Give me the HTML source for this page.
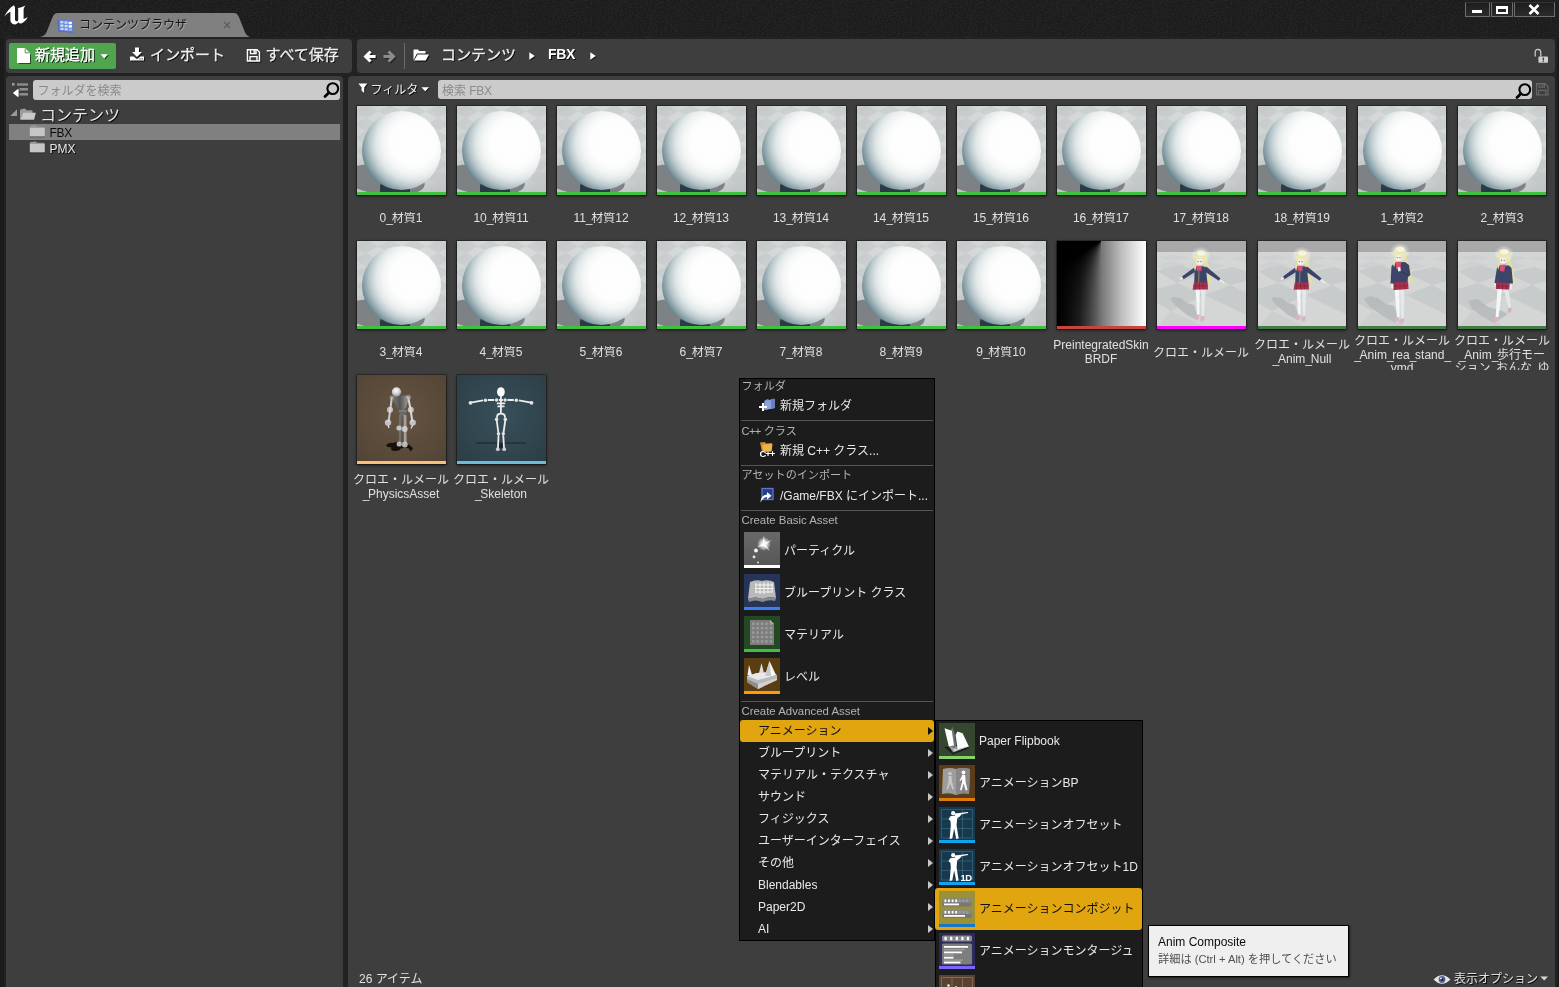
<!DOCTYPE html><html lang="ja"><head><meta charset="utf-8"><title>コンテンツブラウザ</title><style>
*{box-sizing:border-box;margin:0;padding:0}
html,body{width:1559px;height:987px;overflow:hidden;background:#1b1b1b}
body{position:relative;font-family:"Liberation Sans","Noto Sans CJK JP",sans-serif;font-size:12px;color:#e6e6e6;line-height:1}
.a{position:absolute}
.t{position:absolute;white-space:nowrap}
.sh{text-shadow:1px 1px 0 rgba(0,0,0,.85)}
.b{-webkit-text-stroke:.3px currentColor}
.panel{position:absolute;background:#3e3e3e;border-radius:4px}
.inp{position:absolute;background:#cbcbcb;border-radius:3px}
.th{position:absolute;width:89px;height:89px;overflow:hidden;box-shadow:0 1px 3px rgba(0,0,0,.7),0 0 0 1px rgba(0,0,0,.25)}
.th .bar{position:absolute;left:0;right:0;bottom:0;height:3px}
.lb{position:absolute;width:106px;margin-left:-1px;text-align:center;font-size:12px;line-height:13.5px;color:#e0e0e0;overflow:hidden}
.menu{position:absolute;background:#1c1c1c;border:1px solid #000}
.mh{position:absolute;left:1.5px;font-size:11.5px;color:#b4b4b4;white-space:nowrap}
.mi{position:absolute;font-size:12px;color:#e8e8e8;white-space:nowrap}
.sep{position:absolute;left:1px;right:1px;height:1px;background:#555}
.tile{position:absolute;width:36px;height:36px;overflow:hidden}
.tile .bar{position:absolute;left:0;right:0;bottom:0;height:3px}
.arr{position:absolute;width:0;height:0;border-left:5px solid #c8c8c8;border-top:4px solid transparent;border-bottom:4px solid transparent}

.u{margin-right:-1.3px}
.sph{background:radial-gradient(ellipse 70px 60px at 55% 35%,#e4e6e6 0,#d4d7d7 60%,#c2c5c5 100%)}
.floor{position:absolute;left:-40px;top:-40px;width:170px;height:170px;opacity:.45;background:repeating-conic-gradient(#bfc3c3 0 25%,rgba(255,255,255,0) 0 50%) 0 0/34px 34px;transform:scaleY(.55) rotate(45deg)}
.sd{position:absolute;left:-14px;top:59px;width:82px;height:30px;border-radius:50%;background:#757a7d;opacity:.9;transform:rotate(7deg)}
.sc{position:absolute;left:23px;top:74px;width:30px;height:16px;border-radius:40% 40% 0 0;background:#2b3b46}
.ball{position:absolute;left:5px;top:4.5px;width:79px;height:79px;border-radius:50%;background:radial-gradient(circle 55px at 65% 40%,#fff 0,#fdfdfd 42%,#f3f5f5 56%,#e0e6e7 68%,#b9c7cb 80%,#869ea6 91%,#587782 100%)}
</style></head><body><div id="root" style="position:absolute;left:0;top:0;width:1559px;height:987px;will-change:transform">
<svg class="a" style="left:0;top:0" width="1559" height="987"><filter id="nz" x="0" y="0" width="100%" height="100%"><feTurbulence type="fractalNoise" baseFrequency=".8" numOctaves="2" seed="3"/><feColorMatrix values="0 0 0 0 1  0 0 0 0 1  0 0 0 0 1  .5 .5 .5 0 -.62"/></filter><rect width="1559" height="38" filter="url(#nz)" opacity=".16"/></svg>
<div class="a" style="left:4px;top:37px;width:1553px;height:950px;background:#222"></div>
<svg class="a" style="left:38px;top:12px" width="214" height="26" viewBox="0 0 214 26"><path d="M0 25 C4.5 25 7 23.5 8.8 19.5 L14.2 6 C15.5 2.5 16.8 1 20 1 L195.5 1 C198.7 1 200 2.5 201.3 6 L206.7 19.5 C208.5 23.5 210.5 25 213.5 25 Z" fill="#808080"/></svg>
<div class="t" style="left:79px;top:18.5px;font-size:12px;color:#141414;text-shadow:1px 1px 0 rgba(255,255,255,.28)">コンテンツブラウザ</div>
<div class="panel" style="left:6px;top:39px;width:346px;height:34px"></div>
<div class="panel" style="left:357px;top:39px;width:1198px;height:34px"></div>
<div class="a" style="left:9px;top:43px;width:107px;height:26px;background:#50a650;border-radius:2px"></div>
<div class="t sh b" style="left:35px;top:47px;font-size:15px;color:#fff">新規追加</div>
<div class="t sh b" style="left:150px;top:47px;font-size:15px;color:#eee">インポート</div>
<div class="t sh b" style="left:265.5px;top:47px;font-size:15px;color:#eee">すべて保存</div>
<div class="t sh b" style="left:441px;top:47px;font-size:15px;color:#eee">コンテンツ</div>
<div class="t sh" style="left:548px;top:47px;font-size:14px;letter-spacing:-.3px;color:#fff;font-weight:bold">FBX</div>
<div class="panel" style="left:6px;top:76px;width:337px;height:915px"></div>
<div class="panel" style="left:348px;top:76px;width:1207px;height:915px"></div>
<div class="inp" style="left:33px;top:80px;width:307px;height:20px"></div>
<div class="t" style="left:37.5px;top:84.7px;font-size:12px;color:#8a8a8a">フォルダを検索</div>
<div class="inp" style="left:438px;top:80px;width:1094px;height:19px"></div>
<div class="t" style="left:442px;top:84.7px;font-size:12px;color:#8a8a8a">検索 <span style="letter-spacing:-.3px">FBX</span></div>
<div class="t sh" style="left:370.5px;top:84px;font-size:12px;color:#eee">フィルタ</div>
<div class="t sh" style="left:40px;top:108px;font-size:16px;color:#e8e8e8">コンテンツ</div>
<div class="a" style="left:9px;top:124px;width:331px;height:16px;background:#808080"></div>
<div class="t" style="left:49.5px;top:127px;font-size:12px;letter-spacing:-.3px;color:#0c0c0c">FBX</div>
<div class="t sh" style="left:49.5px;top:143px;font-size:12px;color:#e6e6e6">PMX</div>
<svg class="a" style="left:0px;top:0px;" width="32" height="28" viewBox="0 0 32 28"><path d="M4.2 16.8 C6.5 12 10 7.5 13.9 5.2 C14.6 6.2 15 7 15 8.2 L15 19 C15 20.6 15.8 21.3 16.7 21.3 C17.6 21.3 18.2 20.6 18.2 19.4 L18.2 9.2 C18.2 8.5 18 8.3 17.6 8 C20.5 7.8 23.5 6.5 25.7 5.2 C24.2 7 23.6 8.2 23.6 9.8 L23.6 18.9 C25 18.5 26.3 17.9 27.7 17 C26.4 20 23.8 22.6 21.2 23.4 C20 23.6 19 23.2 18.3 22.2 C17.3 23.6 16.2 24.4 14.8 24.4 C12 24.4 10.4 22.6 10.4 19.8 L10.4 11.8 C8 12.8 6 14.6 4.2 16.8 Z" fill="#fff"/></svg>
<svg class="a" style="left:56px;top:17.5px;" width="18" height="16" viewBox="0 0 18 16"><path d="M1.5 2.2 L3 1 L16.5 2.5 L17.2 15 L2.2 13.6Z" fill="#4f6fc0"/><path d="M3 1 L16.5 2.5 L17 14 L3.2 12.4Z" fill="#6484d6"/><g fill="#c9d6f6"><rect x="4.2" y="3" width="3.2" height="2.4"/><rect x="8.4" y="3.4" width="3.2" height="2.4"/><rect x="12.6" y="3.8" width="3.2" height="2.4" fill="#fff"/><rect x="4.3" y="6.4" width="3.2" height="2.4"/><rect x="8.5" y="6.8" width="3.2" height="2.4"/><rect x="12.7" y="7.2" width="3.2" height="2.4" fill="#fff"/><rect x="4.4" y="9.8" width="3.2" height="2.2"/><rect x="8.6" y="10.2" width="3.2" height="2.2"/><rect x="12.8" y="10.6" width="3.2" height="2.2" fill="#9db3ea"/></g></svg>
<svg class="a" style="left:223px;top:21px;" width="8" height="8" viewBox="0 0 8 8"><path d="M1 1 L7 7 M7 1 L1 7" stroke="#5c5c5c" stroke-width="1.2"/></svg>
<div class="a" style="left:1465px;top:2px;width:25px;height:15px;border:1px solid #6e6e6e;border-top-color:#333;background:linear-gradient(#1e1e1e,#2b2b2b)"></div>
<div class="a" style="left:1491px;top:2px;width:22px;height:15px;border:1px solid #6e6e6e;border-top-color:#333;background:linear-gradient(#1e1e1e,#2b2b2b)"></div>
<div class="a" style="left:1514px;top:2px;width:41px;height:15px;border:1px solid #6e6e6e;border-top-color:#333;background:linear-gradient(#1e1e1e,#2b2b2b)"></div>
<div class="a" style="left:1472px;top:10px;width:10px;height:3px;background:#fff"></div>
<div class="a" style="left:1496px;top:6px;width:12px;height:8px;border:2px solid #fff;border-top-width:3px"></div>
<svg class="a" style="left:1528px;top:4px;" width="12" height="11" viewBox="0 0 12 11"><path d="M1.5 1 L10.5 10 M10.5 1 L1.5 10" stroke="#fff" stroke-width="2.6"/></svg>
<svg class="a" style="left:17px;top:48px;" width="14" height="16" viewBox="0 0 14 16"><path d="M1 1 L8 1 L13 6 L13 15.5 L1 15.5Z" fill="#000" opacity=".55" transform="translate(1,1)"/><path d="M0 0 L8 0 L13 5 L13 15 L0 15Z" fill="#fff"/><path d="M8 0 L8 5 L13 5" fill="#50a650" opacity=".0"/><path d="M8.2 0.4 L8.2 4.8 L12.6 4.8" fill="none" stroke="#4a9a4a" stroke-width="1"/></svg>
<svg class="a" style="left:100px;top:54px;" width="10" height="6" viewBox="0 0 10 6"><path d="M1.5 1.2 L9 1.2 L5.25 5.5Z" fill="#000" opacity=".6"/><path d="M.5 .2 L8 .2 L4.25 4.5Z" fill="#fff"/></svg>
<svg class="a" style="left:130px;top:47px;" width="16" height="16" viewBox="0 0 16 16"><g transform="translate(1,1)" opacity=".7"><path d="M5 .5 H9 V5 H12 L7 10 L2 5 H5Z M0 9.5 H14 V13.5 H0Z" fill="#000"/></g><path d="M5 .5 H9 V5 H12 L7 10 L2 5 H5Z" fill="#fff"/><path d="M0 9.5 H3.5 L7 12 L10.5 9.5 H14 V13.5 H0Z" fill="#fff"/><rect x="9.5" y="11.3" width="1.2" height="1.2" fill="#444"/><rect x="11.6" y="11.3" width="1.2" height="1.2" fill="#444"/></svg>
<svg class="a" style="left:246px;top:49px;" width="16" height="14" viewBox="0 0 16 14"><g transform="translate(1,1)" opacity=".7"><path d="M1.5 .8 H11 L13.5 3.2 V12 H1.5Z" fill="none" stroke="#000" stroke-width="1.5"/></g><path d="M1.5 .8 H11 L13.5 3.2 V12 H1.5Z" fill="none" stroke="#fff" stroke-width="1.5"/><path d="M4.5 .8 V4.6 H10 V.8 M4 12 V7.6 H11 V12" fill="none" stroke="#fff" stroke-width="1.4"/><rect x="7.4" y="1.2" width="1.8" height="2.6" fill="#fff"/></svg>
<svg class="a" style="left:363px;top:50px;" width="15" height="15" viewBox="0 0 15 15"><path d="M6.5 .5 L8.6 2.6 L6.2 5 L12.6 5 L12.6 8 L6.2 8 L8.6 10.4 L6.5 12.5 L.5 6.5Z" fill="#000" opacity=".6" transform="translate(1.2,1.2)"/><path d="M6.5 .5 L8.6 2.6 L6.2 5 L12.6 5 L12.6 8 L6.2 8 L8.6 10.4 L6.5 12.5 L.5 6.5Z" fill="#fff"/></svg>
<svg class="a" style="left:383px;top:50px;" width="15" height="15" viewBox="0 0 15 15"><g transform="translate(13.1,0) scale(-1,1)"><path d="M6.5 .5 L8.6 2.6 L6.2 5 L12.6 5 L12.6 8 L6.2 8 L8.6 10.4 L6.5 12.5 L.5 6.5Z" fill="#000" opacity=".4" transform="translate(-1.2,1.2)"/><path d="M6.5 .5 L8.6 2.6 L6.2 5 L12.6 5 L12.6 8 L6.2 8 L8.6 10.4 L6.5 12.5 L.5 6.5Z" fill="#8b8b8b"/></g></svg>
<div class="a" style="left:404px;top:43px;width:1px;height:26px;background:#6c6c6c"></div>
<svg class="a" style="left:413px;top:49px;" width="19" height="14" viewBox="0 0 19 14"><path d="M.5 11 L.5 1.2 Q.5 .5 1.2 .5 L5 .5 L6.2 2 L12 2 Q12.6 2 12.6 2.8 L12.6 4.4 L4 4.4 Z M4.6 5.4 L16 5.4 L12.6 11.6 L1 11.6Z" fill="#000" opacity=".6" transform="translate(1.2,1.2)"/><path d="M.5 11 L.5 1.2 Q.5 .5 1.2 .5 L5 .5 L6.2 2 L12 2 Q12.6 2 12.6 2.8 L12.6 4.4 L4 4.4 Z M4.6 5.4 L16 5.4 L12.6 11.6 L1 11.6Z" fill="#fff"/></svg>
<svg class="a" style="left:529px;top:52px;" width="8" height="10" viewBox="0 0 8 10"><path d="M1.3 1.2 L6.8 5 L1.3 8.8Z" fill="#000" opacity=".6"/><path d="M.3 .2 L5.8 4 L.3 7.8Z" fill="#fff"/></svg>
<svg class="a" style="left:590px;top:52px;" width="8" height="10" viewBox="0 0 8 10"><path d="M1.3 1.2 L6.8 5 L1.3 8.8Z" fill="#000" opacity=".6"/><path d="M.3 .2 L5.8 4 L.3 7.8Z" fill="#fff"/></svg>
<svg class="a" style="left:1533px;top:47.5px;" width="16" height="16" viewBox="0 0 16 16"><path d="M2.2 8.5 V4.6 Q2.2 1.4 5 1.4 Q7.8 1.4 7.8 4.6 V8.5" fill="none" stroke="#cfcfcf" stroke-width="1.2"/><rect x="5.4" y="8.4" width="9.6" height="6.4" rx="1" fill="#cfcfcf"/><rect x="9.6" y="9.6" width="1.4" height="2.4" fill="#3e3e3e"/><rect x="9.6" y="12.6" width="1.4" height="1.2" fill="#3e3e3e"/></svg>
<svg class="a" style="left:12px;top:83px;" width="17" height="15" viewBox="0 0 17 15"><rect x="0" y="0" width="2.6" height="2.6" fill="#999"/><rect x="5" y=".3" width="11" height="2.4" fill="#8c8c8c"/><rect x="7.5" y="5" width="8.5" height="2.6" fill="#8c8c8c"/><rect x="7.5" y="10" width="8.5" height="2.6" fill="#8c8c8c"/><path d="M.8 10 L5.8 6 L6.6 6.6 L6.6 13.4 L5.8 14Z" fill="#fff"/></svg>
<svg class="a" style="left:323px;top:82px;" width="17" height="17" viewBox="0 0 17 17"><circle cx="9.8" cy="6.6" r="5.4" fill="none" stroke="#000" stroke-width="2.1"/><path d="M5.8 10.8 L2 14.6" stroke="#000" stroke-width="2.8" stroke-linecap="round"/></svg>
<svg class="a" style="left:1515px;top:82.5px;" width="17" height="17" viewBox="0 0 17 17"><circle cx="9.8" cy="6.6" r="5.4" fill="none" stroke="#000" stroke-width="2.1"/><path d="M5.8 10.8 L2 14.6" stroke="#000" stroke-width="2.8" stroke-linecap="round"/></svg>
<svg class="a" style="left:1535.7px;top:83px;" width="14" height="14" viewBox="0 0 14 14"><path d="M.6 .6 H9 L12 3.4 V12 H.6Z M3 .6 V4.2 H8.4 V.6 M2.6 12 V7.4 H10 V12" fill="none" stroke="#6a6a6a" stroke-width="1.1"/><rect x="5.6" y="1.2" width="1.8" height="2.2" fill="#6a6a6a"/></svg>
<svg class="a" style="left:358px;top:83px;" width="11" height="12" viewBox="0 0 11 12"><path d="M1.4 1.2 H10.4 L7.2 5.4 V10.8 L4.6 8.6 V5.4Z" fill="#000" opacity=".6"/><path d="M.4 .4 H9.4 L6.2 4.6 V10 L3.6 7.8 V4.6Z" fill="#fff"/></svg>
<svg class="a" style="left:421px;top:87px;" width="10" height="6" viewBox="0 0 10 6"><path d="M1.3 1 L9 1 L5.15 5Z" fill="#000" opacity=".6"/><path d="M.4 .2 L8.1 .2 L4.25 4.2Z" fill="#fff"/></svg>
<svg class="a" style="left:10px;top:109px;" width="8" height="8" viewBox="0 0 8 8"><path d="M7 .2 V7 H.2Z" fill="#9a9a9a"/></svg>
<svg class="a" style="left:19px;top:108px;" width="18" height="13" viewBox="0 0 18 13"><path d="M1 12 V2.4 Q1 1.4 2 1.2 L6 .6 L7.4 2.2 L12.6 2.2 Q13.6 2.2 13.6 3.2 V5 H5 Z" fill="#9c9c9c"/><path d="M4.4 4.8 H16.8 L15 12 H1.2Z" fill="#c9c9c9"/><path d="M1.2 12 H15" stroke="#2a2a2a" stroke-width=".8" opacity=".6"/></svg>
<svg class="a" style="left:29px;top:125px;" width="17" height="13" viewBox="0 0 17 13"><path d="M.8 2.2 Q.8 1 2 1 L6.6 .4 L8 1.8 L14.6 1.8 Q15.6 1.8 15.6 2.8 V4 H.8Z" fill="#9c9c9c"/><rect x=".8" y="3" width="15" height="8.6" rx="1" fill="#c6c6c6"/><path d="M1 11.9 H15.6" stroke="#222" stroke-width=".8" opacity=".6"/></svg>
<svg class="a" style="left:29px;top:141px;" width="17" height="13" viewBox="0 0 17 13"><path d="M.8 2.2 Q.8 1 2 1 L6.6 .4 L8 1.8 L14.6 1.8 Q15.6 1.8 15.6 2.8 V4 H.8Z" fill="#9c9c9c"/><rect x=".8" y="3" width="15" height="8.6" rx="1" fill="#c6c6c6"/><path d="M1 11.9 H15.6" stroke="#222" stroke-width=".8" opacity=".6"/></svg>
<svg class="a" style="left:1433px;top:972.7px;" width="18" height="13" viewBox="0 0 18 13"><path d="M.5 6.5 Q9 -2 17.5 6.5 Q9 15 .5 6.5Z" fill="#e6e6e6"/><circle cx="9" cy="6.5" r="3.4" fill="#57639c"/><circle cx="9" cy="6.5" r="1.5" fill="#1e2340"/><circle cx="8" cy="5.4" r=".9" fill="#fff"/></svg>
<svg class="a" style="left:1540px;top:976px;" width="10" height="6" viewBox="0 0 10 6"><path d="M.4 .4 L8 .4 L4.2 4.6Z" fill="#d8d8d8"/></svg>
<div class="th sph" style="left:357px;top:106px;width:89px"><div class="floor"></div><div class="sd"></div><div class="sc"></div><div class="ball"></div><div class="bar" style="background:#3fc13f"></div></div>
<div class="lb" style="left:349px;top:211.7px">0<span class="u">_</span>材質1</div>
<div class="th sph" style="left:457px;top:106px;width:89px"><div class="floor"></div><div class="sd"></div><div class="sc"></div><div class="ball"></div><div class="bar" style="background:#3fc13f"></div></div>
<div class="lb" style="left:449px;top:211.7px">10<span class="u">_</span>材質11</div>
<div class="th sph" style="left:557px;top:106px;width:89px"><div class="floor"></div><div class="sd"></div><div class="sc"></div><div class="ball"></div><div class="bar" style="background:#3fc13f"></div></div>
<div class="lb" style="left:549px;top:211.7px">11<span class="u">_</span>材質12</div>
<div class="th sph" style="left:657px;top:106px;width:89px"><div class="floor"></div><div class="sd"></div><div class="sc"></div><div class="ball"></div><div class="bar" style="background:#3fc13f"></div></div>
<div class="lb" style="left:649px;top:211.7px">12<span class="u">_</span>材質13</div>
<div class="th sph" style="left:757px;top:106px;width:89px"><div class="floor"></div><div class="sd"></div><div class="sc"></div><div class="ball"></div><div class="bar" style="background:#3fc13f"></div></div>
<div class="lb" style="left:749px;top:211.7px">13<span class="u">_</span>材質14</div>
<div class="th sph" style="left:857px;top:106px;width:89px"><div class="floor"></div><div class="sd"></div><div class="sc"></div><div class="ball"></div><div class="bar" style="background:#3fc13f"></div></div>
<div class="lb" style="left:849px;top:211.7px">14<span class="u">_</span>材質15</div>
<div class="th sph" style="left:957px;top:106px;width:89px"><div class="floor"></div><div class="sd"></div><div class="sc"></div><div class="ball"></div><div class="bar" style="background:#3fc13f"></div></div>
<div class="lb" style="left:949px;top:211.7px">15<span class="u">_</span>材質16</div>
<div class="th sph" style="left:1057px;top:106px;width:89px"><div class="floor"></div><div class="sd"></div><div class="sc"></div><div class="ball"></div><div class="bar" style="background:#3fc13f"></div></div>
<div class="lb" style="left:1049px;top:211.7px">16<span class="u">_</span>材質17</div>
<div class="th sph" style="left:1157px;top:106px;width:89px"><div class="floor"></div><div class="sd"></div><div class="sc"></div><div class="ball"></div><div class="bar" style="background:#3fc13f"></div></div>
<div class="lb" style="left:1149px;top:211.7px">17<span class="u">_</span>材質18</div>
<div class="th sph" style="left:1258px;top:106px;width:88px"><div class="floor"></div><div class="sd"></div><div class="sc"></div><div class="ball"></div><div class="bar" style="background:#3fc13f"></div></div>
<div class="lb" style="left:1250px;top:211.7px">18<span class="u">_</span>材質19</div>
<div class="th sph" style="left:1358px;top:106px;width:88px"><div class="floor"></div><div class="sd"></div><div class="sc"></div><div class="ball"></div><div class="bar" style="background:#3fc13f"></div></div>
<div class="lb" style="left:1350px;top:211.7px">1<span class="u">_</span>材質2</div>
<div class="th sph" style="left:1458px;top:106px;width:88px"><div class="floor"></div><div class="sd"></div><div class="sc"></div><div class="ball"></div><div class="bar" style="background:#3fc13f"></div></div>
<div class="lb" style="left:1450px;top:211.7px">2<span class="u">_</span>材質3</div>
<div class="th sph" style="left:357px;top:241px;height:88px"><div class="floor"></div><div class="sd"></div><div class="sc"></div><div class="ball"></div><div class="bar" style="background:#3fc13f"></div></div>
<div class="lb" style="left:349px;top:346px">3<span class="u">_</span>材質4</div>
<div class="th sph" style="left:457px;top:241px;height:88px"><div class="floor"></div><div class="sd"></div><div class="sc"></div><div class="ball"></div><div class="bar" style="background:#3fc13f"></div></div>
<div class="lb" style="left:449px;top:346px">4<span class="u">_</span>材質5</div>
<div class="th sph" style="left:557px;top:241px;height:88px"><div class="floor"></div><div class="sd"></div><div class="sc"></div><div class="ball"></div><div class="bar" style="background:#3fc13f"></div></div>
<div class="lb" style="left:549px;top:346px">5<span class="u">_</span>材質6</div>
<div class="th sph" style="left:657px;top:241px;height:88px"><div class="floor"></div><div class="sd"></div><div class="sc"></div><div class="ball"></div><div class="bar" style="background:#3fc13f"></div></div>
<div class="lb" style="left:649px;top:346px">6<span class="u">_</span>材質7</div>
<div class="th sph" style="left:757px;top:241px;height:88px"><div class="floor"></div><div class="sd"></div><div class="sc"></div><div class="ball"></div><div class="bar" style="background:#3fc13f"></div></div>
<div class="lb" style="left:749px;top:346px">7<span class="u">_</span>材質8</div>
<div class="th sph" style="left:857px;top:241px;height:88px"><div class="floor"></div><div class="sd"></div><div class="sc"></div><div class="ball"></div><div class="bar" style="background:#3fc13f"></div></div>
<div class="lb" style="left:849px;top:346px">8<span class="u">_</span>材質9</div>
<div class="th sph" style="left:957px;top:241px;height:88px"><div class="floor"></div><div class="sd"></div><div class="sc"></div><div class="ball"></div><div class="bar" style="background:#3fc13f"></div></div>
<div class="lb" style="left:949px;top:346px">9<span class="u">_</span>材質10</div>
<div class="th" style="left:1057px;top:241px;height:88px"><div class="a" style="left:0;top:0;width:89px;height:89px;background:conic-gradient(from 180deg at 50% 0,rgba(0,0,0,0) 0deg,rgba(0,0,0,.55) 28deg,#000 60deg,#000 90deg,rgba(0,0,0,0) 90deg),linear-gradient(90deg,#000 0,#2a2a2a 25%,#777 50%,#bdbdbd 72%,#fff 100%)"></div><div class="bar" style="background:#c8453c"></div></div>
<div class="lb" style="left:1049px;top:339px">PreintegratedSkin<br>BRDF</div>
<div class="th" style="left:1157px;top:241px;height:88px"><svg class="a" style="left:0;top:0" width="89" height="89" viewBox="0 0 89 89"><defs><radialGradient id="hg"><stop offset=".5" stop-color="#fff" stop-opacity=".5"/><stop offset="1" stop-color="#fff" stop-opacity="0"/></radialGradient></defs><rect width="89" height="89" fill="#d4d6d6"/><rect width="89" height="11" fill="#a9a9a9"/><g fill="#c4c7c7" opacity=".7"><path d="M0 30 L22 24 L48 32 L20 42Z"/><path d="M48 32 L76 26 L89 30 L89 40 L74 44Z"/><path d="M20 42 L48 54 L14 70 L0 62 L0 48Z"/><path d="M74 44 L89 52 L89 74 L48 54Z"/><path d="M14 70 L48 86 L0 86Z" opacity=".6"/></g><g fill="#cacdcd" opacity=".55"><path d="M0 16 L18 14 L34 17 L14 20Z"/><path d="M34 17 L54 14 L70 17 L52 21Z"/><path d="M70 17 L89 15 L89 21Z"/><path d="M14 20 L30 24 L8 28 L0 25Z"/><path d="M52 21 L70 25 L50 29 L34 24Z"/></g><path d="M41 79.5 L30 74 L18 64 L13.5 58 L16 56 L24 57 L30 62 L37 64 L39.5 72Z" fill="#b4b9ba" opacity=".85"/><path d="M47 14 L50.4 20 L53 30 L55 43 L51.5 44 L49.5 30 L47 24Z" fill="#e3dda9"/><path d="M37.9 26 L39.2 30.2 L26.5 38.2 L25 35.6Z" fill="#3d4469"/><path d="M49.3 25.6 L63.6 37.6 L61.8 39.8 L47.8 30.4Z" fill="#3d4469"/><path d="M25.4 36.6 L22.9 38.3" stroke="#f3f0ee" stroke-width="1.4"/><path d="M62.8 38.8 L67.4 42.2" stroke="#f3f0ee" stroke-width="1.4"/><path d="M37.7 25.8 L40 25 L42 30 L44.5 25 L48.8 26 L50.4 42 L37.2 42Z" fill="#3d4469"/><path d="M42 30 L41.6 42" stroke="#c9a85a" stroke-width=".6"/><path d="M36.8 41.5 L50.6 41.5 L51 48.4 L35.6 48.8Z" fill="#a9324c"/><path d="M39 42 L38.4 48.6 M42.5 42 L42.4 48.6 M46 42 L46.6 48.5 M36.2 45 L50.8 44.8" stroke="#7a2036" stroke-width=".7" opacity=".8"/><path d="M38.7 48.7 L42.8 48.7 L42.4 74 L40.2 74Z" fill="#f4f6f7"/><path d="M43.8 48.7 L48.3 48.7 L47 75 L45 75Z" fill="#e3e8ec"/><path d="M38.2 74 L42.4 73.5 L42.2 78 L38.6 79.5Z" fill="#d8b5c6"/><path d="M43.2 75.5 L47.6 75 L47.6 79.5 L43.6 80.8Z" fill="#d8b5c6"/><g transform="translate(0,0)"><ellipse cx="43.8" cy="14.5" rx="10" ry="9" fill="url(#hg)"/><ellipse cx="43.8" cy="16.6" rx="6.6" ry="7.3" fill="#e9e5b8"/><ellipse cx="44.2" cy="12.4" rx="4.2" ry="2.4" fill="#f7f5de"/><ellipse cx="42.5" cy="20.4" rx="3.1" ry="3.5" fill="#f4f1ef"/><path d="M37.6 17.5 Q42.5 13 49 17 L48.2 20.5 Q45.5 17.6 43.2 18.4 Q40.6 17.6 38.6 20.8Z" fill="#ebe7ba"/><circle cx="41.2" cy="20.6" r=".65" fill="#56669a"/><circle cx="44" cy="20.7" r=".65" fill="#56669a"/><path d="M37.3 18 L36.8 26 L38 30.5 L39.6 25 L39 19.5Z" fill="#e2dca8"/></g><path d="M39.2 25 L44.8 24.8 L44.3 30.4 L42 29 L40 30.4Z" fill="#d94f70"/></svg><div class="bar" style="background:#ff00ff"></div></div>
<div class="lb" style="left:1149px;top:346.5px">クロエ・ルメール</div>
<div class="th" style="left:1258px;top:241px;height:88px;width:88px"><svg class="a" style="left:0;top:0" width="89" height="89" viewBox="0 0 89 89"><defs><radialGradient id="hg"><stop offset=".5" stop-color="#fff" stop-opacity=".5"/><stop offset="1" stop-color="#fff" stop-opacity="0"/></radialGradient></defs><rect width="89" height="89" fill="#d4d6d6"/><rect width="89" height="11" fill="#a9a9a9"/><g fill="#c4c7c7" opacity=".7"><path d="M0 30 L22 24 L48 32 L20 42Z"/><path d="M48 32 L76 26 L89 30 L89 40 L74 44Z"/><path d="M20 42 L48 54 L14 70 L0 62 L0 48Z"/><path d="M74 44 L89 52 L89 74 L48 54Z"/><path d="M14 70 L48 86 L0 86Z" opacity=".6"/></g><g fill="#cacdcd" opacity=".55"><path d="M0 16 L18 14 L34 17 L14 20Z"/><path d="M34 17 L54 14 L70 17 L52 21Z"/><path d="M70 17 L89 15 L89 21Z"/><path d="M14 20 L30 24 L8 28 L0 25Z"/><path d="M52 21 L70 25 L50 29 L34 24Z"/></g><path d="M41 79.5 L30 74 L18 64 L13.5 58 L16 56 L24 57 L30 62 L37 64 L39.5 72Z" fill="#b4b9ba" opacity=".85"/><path d="M47 14 L50.4 20 L53 30 L55 43 L51.5 44 L49.5 30 L47 24Z" fill="#e3dda9"/><path d="M37.9 26 L39.2 30.2 L26.5 38.2 L25 35.6Z" fill="#3d4469"/><path d="M49.3 25.6 L63.6 37.6 L61.8 39.8 L47.8 30.4Z" fill="#3d4469"/><path d="M25.4 36.6 L22.9 38.3" stroke="#f3f0ee" stroke-width="1.4"/><path d="M62.8 38.8 L67.4 42.2" stroke="#f3f0ee" stroke-width="1.4"/><path d="M37.7 25.8 L40 25 L42 30 L44.5 25 L48.8 26 L50.4 42 L37.2 42Z" fill="#3d4469"/><path d="M42 30 L41.6 42" stroke="#c9a85a" stroke-width=".6"/><path d="M36.8 41.5 L50.6 41.5 L51 48.4 L35.6 48.8Z" fill="#a9324c"/><path d="M39 42 L38.4 48.6 M42.5 42 L42.4 48.6 M46 42 L46.6 48.5 M36.2 45 L50.8 44.8" stroke="#7a2036" stroke-width=".7" opacity=".8"/><path d="M38.7 48.7 L42.8 48.7 L42.4 74 L40.2 74Z" fill="#f4f6f7"/><path d="M43.8 48.7 L48.3 48.7 L47 75 L45 75Z" fill="#e3e8ec"/><path d="M38.2 74 L42.4 73.5 L42.2 78 L38.6 79.5Z" fill="#d8b5c6"/><path d="M43.2 75.5 L47.6 75 L47.6 79.5 L43.6 80.8Z" fill="#d8b5c6"/><g transform="translate(0,0)"><ellipse cx="43.8" cy="14.5" rx="10" ry="9" fill="url(#hg)"/><ellipse cx="43.8" cy="16.6" rx="6.6" ry="7.3" fill="#e9e5b8"/><ellipse cx="44.2" cy="12.4" rx="4.2" ry="2.4" fill="#f7f5de"/><ellipse cx="42.5" cy="20.4" rx="3.1" ry="3.5" fill="#f4f1ef"/><path d="M37.6 17.5 Q42.5 13 49 17 L48.2 20.5 Q45.5 17.6 43.2 18.4 Q40.6 17.6 38.6 20.8Z" fill="#ebe7ba"/><circle cx="41.2" cy="20.6" r=".65" fill="#56669a"/><circle cx="44" cy="20.7" r=".65" fill="#56669a"/><path d="M37.3 18 L36.8 26 L38 30.5 L39.6 25 L39 19.5Z" fill="#e2dca8"/></g><path d="M39.2 25 L44.8 24.8 L44.3 30.4 L42 29 L40 30.4Z" fill="#d94f70"/></svg><div class="bar" style="background:#447a44"></div></div>
<div class="lb" style="left:1250px;top:339px">クロエ・ルメール<br><span class="u">_</span>Anim<span class="u">_</span>Null</div>
<div class="th" style="left:1358px;top:241px;height:88px;width:88px"><svg class="a" style="left:0;top:0" width="89" height="89" viewBox="0 0 89 89"><defs><radialGradient id="hg"><stop offset=".5" stop-color="#fff" stop-opacity=".5"/><stop offset="1" stop-color="#fff" stop-opacity="0"/></radialGradient></defs><rect width="89" height="89" fill="#d4d6d6"/><rect width="89" height="11" fill="#a9a9a9"/><g fill="#c4c7c7" opacity=".7"><path d="M0 30 L22 24 L48 32 L20 42Z"/><path d="M48 32 L76 26 L89 30 L89 40 L74 44Z"/><path d="M20 42 L48 54 L14 70 L0 62 L0 48Z"/><path d="M74 44 L89 52 L89 74 L48 54Z"/><path d="M14 70 L48 86 L0 86Z" opacity=".6"/></g><g fill="#cacdcd" opacity=".55"><path d="M0 16 L18 14 L34 17 L14 20Z"/><path d="M34 17 L54 14 L70 17 L52 21Z"/><path d="M70 17 L89 15 L89 21Z"/><path d="M14 20 L30 24 L8 28 L0 25Z"/><path d="M52 21 L70 25 L50 29 L34 24Z"/></g><path d="M38 82 L26 76 L12 66 L6 58 L12 55 L20 57 L28 63 L36 65 L40 74 Z" fill="#b4b9ba" opacity=".85"/><path d="M45 10 L48.5 16 L52 27 L55.5 41 L51.5 43 L48 28 L45 20Z" fill="#e3dda9"/><path d="M33.5 25 L37 21.5 L47 21 L51 24 L52.5 34 L50 36 L49.5 42 L32.5 42.5Z" fill="#3d4469"/><path d="M44 31 L50.5 34.5" stroke="#2f3557" stroke-width="1"/><path d="M35 41.5 L50 41 L50.6 48 L35.4 49Z" fill="#a9324c"/><path d="M38 42 L37.6 48.8 M42 42 L42 48.6 M46 41.6 L46.6 48.3 M35.2 45.2 L50.4 44.8" stroke="#7a2036" stroke-width=".7" opacity=".8"/><path d="M33 43 L35.4 43 L35.4 47.6 L33.6 47.6Z" fill="#f3f0ee"/><path d="M36.6 49 L41.5 49 L41.6 77 L39 77Z" fill="#f4f6f7"/><path d="M42 49 L46.4 49 L46 77 L43 77Z" fill="#e3e8ec"/><path d="M36.4 77 L41.2 76 L41 80 L36 81.6Z" fill="#d8b5c6"/><path d="M41.5 78.5 L45.8 77.6 L45.6 82 L41 83.6Z" fill="#d8b5c6"/><g transform="translate(-2,-4)"><ellipse cx="43.8" cy="14.5" rx="10" ry="9" fill="url(#hg)"/><ellipse cx="43.8" cy="16.6" rx="6.6" ry="7.3" fill="#e9e5b8"/><ellipse cx="44.2" cy="12.4" rx="4.2" ry="2.4" fill="#f7f5de"/><ellipse cx="42.5" cy="20.4" rx="3.1" ry="3.5" fill="#f4f1ef"/><path d="M37.6 17.5 Q42.5 13 49 17 L48.2 20.5 Q45.5 17.6 43.2 18.4 Q40.6 17.6 38.6 20.8Z" fill="#ebe7ba"/><circle cx="41.2" cy="20.6" r=".65" fill="#56669a"/><circle cx="44" cy="20.7" r=".65" fill="#56669a"/><path d="M37.3 18 L36.8 26 L38 30.5 L39.6 25 L39 19.5Z" fill="#e2dca8"/></g><path d="M37.5 21 L43.2 20.8 L42.4 28.5 L38.4 28Z" fill="#d94f70"/><path d="M39.6 26.6 L42.2 26 L42.8 30 L40.2 30.6Z" fill="#f3f0ee"/></svg><div class="bar" style="background:#447a44"></div></div>
<div class="lb" style="left:1350px;top:335px;height:35px">クロエ・ルメール<br><span class="u">_</span>Anim<span class="u">_</span>rea<span class="u">_</span>stand<span class="u">_</span><br>vmd</div>
<div class="th" style="left:1458px;top:241px;height:88px;width:88px"><svg class="a" style="left:0;top:0" width="89" height="89" viewBox="0 0 89 89"><defs><radialGradient id="hg"><stop offset=".5" stop-color="#fff" stop-opacity=".5"/><stop offset="1" stop-color="#fff" stop-opacity="0"/></radialGradient></defs><rect width="89" height="89" fill="#d4d6d6"/><rect width="89" height="11" fill="#a9a9a9"/><g fill="#c4c7c7" opacity=".7"><path d="M0 30 L22 24 L48 32 L20 42Z"/><path d="M48 32 L76 26 L89 30 L89 40 L74 44Z"/><path d="M20 42 L48 54 L14 70 L0 62 L0 48Z"/><path d="M74 44 L89 52 L89 74 L48 54Z"/><path d="M14 70 L48 86 L0 86Z" opacity=".6"/></g><g fill="#cacdcd" opacity=".55"><path d="M0 16 L18 14 L34 17 L14 20Z"/><path d="M34 17 L54 14 L70 17 L52 21Z"/><path d="M70 17 L89 15 L89 21Z"/><path d="M14 20 L30 24 L8 28 L0 25Z"/><path d="M52 21 L70 25 L50 29 L34 24Z"/></g><path d="M36 82 L22 74 L14 68 L10 60 L20 58 L30 66 L44 70 L50 73 Z" fill="#b4b9ba" opacity=".85"/><path d="M49 13 L52.5 19 L55.5 30 L57.5 42 L54 43.5 L52 30 L49 22Z" fill="#e3dda9"/><path d="M39 26.5 L42 24.5 L51 24.5 L53.5 27 L55 42.5 L36.5 42Z" fill="#3d4469"/><path d="M37.5 41.5 L51.6 42 L51.2 48.6 L38 48Z" fill="#a9324c"/><path d="M40.5 42 L40.4 48.2 M44.5 42 L44.6 48.4 M48 42 L48.6 48.5 M37.8 45 L51.4 45.2" stroke="#7a2036" stroke-width=".7" opacity=".8"/><path d="M52 43.5 L54 44 L53.4 48.6 L51.8 48Z" fill="#f3f0ee"/><path d="M36.4 42 L38 42.4 L37.6 46 L36.2 45.6Z" fill="#f3f0ee"/><path d="M39.5 48 L44 48.5 L40.6 76 L37.6 76Z" fill="#f4f6f7"/><path d="M46 49 L50.6 49 L53 66 L50.6 67Z" fill="#e3e8ec"/><path d="M34.6 77 L40 76 L40.6 79.6 L35.4 82.4Z" fill="#d8b5c6"/><path d="M50 67.5 L53.6 66.5 L53.2 71 L49.6 72Z" fill="#d3aec0"/><g transform="translate(2.2,-1.4)"><ellipse cx="43.8" cy="14.5" rx="10" ry="9" fill="url(#hg)"/><ellipse cx="43.8" cy="16.6" rx="6.6" ry="7.3" fill="#e9e5b8"/><ellipse cx="44.2" cy="12.4" rx="4.2" ry="2.4" fill="#f7f5de"/><ellipse cx="42.5" cy="20.4" rx="3.1" ry="3.5" fill="#f4f1ef"/><path d="M37.6 17.5 Q42.5 13 49 17 L48.2 20.5 Q45.5 17.6 43.2 18.4 Q40.6 17.6 38.6 20.8Z" fill="#ebe7ba"/><circle cx="41.2" cy="20.6" r=".65" fill="#56669a"/><circle cx="44" cy="20.7" r=".65" fill="#56669a"/><path d="M37.3 18 L36.8 26 L38 30.5 L39.6 25 L39 19.5Z" fill="#e2dca8"/></g><path d="M41.6 24 L47.6 23.6 L46.2 30.6 L42.2 30.2Z" fill="#d94f70"/></svg><div class="bar" style="background:#447a44"></div></div>
<div class="lb" style="left:1450px;top:335px;height:35px">クロエ・ルメール<br><span class="u">_</span>Anim<span class="u">_</span>歩行モー<br>ション<span class="u">_</span>おんな<span class="u">_</span>ゆ</div>
<div class="th" style="left:357px;top:375px"><svg class="a" style="left:0;top:0" width="89" height="89" viewBox="0 0 89 89"><defs><radialGradient id="pg" cx="50%" cy="45%" r="75%"><stop offset="0" stop-color="#665442"/><stop offset="1" stop-color="#514334"/></radialGradient><linearGradient id="mt" x1="0" x2="1"><stop offset="0" stop-color="#7a7a7a"/><stop offset=".45" stop-color="#555"/><stop offset="1" stop-color="#a2a2a2"/></linearGradient><radialGradient id="hd" cx="45%" cy="35%" r="65%"><stop offset="0" stop-color="#fff"/><stop offset=".6" stop-color="#cfcfcf"/><stop offset="1" stop-color="#8a8a8a"/></radialGradient></defs><rect width="89" height="89" fill="url(#pg)"/><path d="M29 71 Q31 67 36 68 Q40 66 44 68 L50 69 Q55 71 56 74 L53 76.5 L52 73.5 Q48 72 44 73.5 Q42 76.5 37 76 Q33 75.5 34.5 72.5 Q31 72 29 71Z" fill="#17110b"/><path d="M34.8 23 L33.2 35 L31.5 47" stroke="#c9c9c9" stroke-width="2" fill="none"/><path d="M51.3 22.5 L53.6 35 L55.4 47" stroke="#dadada" stroke-width="2" fill="none"/><path d="M35.5 21 L50 20.5 L52 23 L49 33 L44.8 36 L40.5 33 L36 25Z" fill="url(#mt)"/><path d="M41.5 35.8 L50 35.8 L48.5 40 L45.5 42 L43 40Z" fill="#6a6a6a"/><path d="M41.5 35.8 H50" stroke="#9a9a9a" stroke-width=".8"/><path d="M43.2 40 L43 68" stroke="#6e6e6e" stroke-width="2.6"/><path d="M48 40 L48.2 68" stroke="#a0a0a0" stroke-width="2.8"/><circle cx="39.5" cy="17" r="4.7" fill="url(#hd)"/><g fill="#d9d9d9" opacity=".82"><circle cx="33" cy="34.8" r="3"/><circle cx="53.8" cy="34.8" r="3"/><circle cx="31" cy="47.6" r="3.2"/><circle cx="55.7" cy="47.6" r="3.2"/><circle cx="42" cy="53" r="2.6"/><circle cx="47.7" cy="54" r="3"/><circle cx="42.2" cy="69" r="2.6"/><circle cx="47.8" cy="69.6" r="2.9"/><circle cx="51.6" cy="22.3" r="2.2" opacity=".6"/><circle cx="34.6" cy="22.6" r="2" opacity=".6"/></g><path d="M31 50 L32 53 M55.7 50 L54 53.5" stroke="#e6e6e6" stroke-width="1.2"/></svg><div class="bar" style="background:#fbbf77"></div></div>
<div class="lb" style="left:349px;top:474.3px">クロエ・ルメール<br><span class="u">_</span>PhysicsAsset</div>
<div class="th" style="left:457px;top:375px"><svg class="a" style="left:0;top:0" width="89" height="89" viewBox="0 0 89 89"><defs><radialGradient id="sg" cx="50%" cy="45%" r="75%"><stop offset="0" stop-color="#38505a"/><stop offset="1" stop-color="#2b3d45"/></radialGradient></defs><rect width="89" height="89" fill="url(#sg)"/><path d="M19.5 68 L69 68" stroke="#1a2328" stroke-width="1.1"/><ellipse cx="44" cy="71" rx="4.2" ry="2.6" fill="#1b262b"/><path d="M13.8 27.6 L26 25.4 M30.8 25 L37.2 25 M41.8 25 L46 25 M50.4 25 L56.8 25 M61.8 25.4 L74.2 27.6" stroke="#ededed" stroke-width="1.8" fill="none"/><g stroke="#ededed" stroke-width="1.8" fill="none" stroke-linecap="round"><path d="M43.9 21.5 L43.9 37.5"/><path d="M40.6 28.4 L47.4 28.4 M41.2 31.4 L46.8 31.4"/><path d="M40 42 Q40 38.6 43.9 38.6 Q48 38.6 48 42"/><path d="M39.8 46 L41.3 57 M41.5 61 L41 72.5"/><path d="M48.2 46 L46.6 57 M46.3 61 L47 72.5"/></g><ellipse cx="43.9" cy="16.9" rx="3.9" ry="4.7" fill="#fbfbfb"/><g fill="#e4e4e4"><circle cx="13.5" cy="27.8" r="1.9"/><circle cx="74.5" cy="27.8" r="1.9"/><circle cx="28.4" cy="25.2" r="1.7"/><circle cx="59.3" cy="25.2" r="1.7"/><circle cx="39.5" cy="25" r="1.7"/><circle cx="48.1" cy="25" r="1.7"/><circle cx="39.6" cy="44.4" r="1.8"/><circle cx="48.3" cy="44.4" r="1.8"/><circle cx="41.5" cy="58.8" r="1.7"/><circle cx="46.3" cy="58.8" r="1.7"/><circle cx="40.8" cy="74.2" r="1.9" fill="#cfcfcf"/><circle cx="47.2" cy="74.2" r="1.9" fill="#cfcfcf"/></g></svg><div class="bar" style="background:#6bbbdd"></div></div>
<div class="lb" style="left:449px;top:474.3px">クロエ・ルメール<br><span class="u">_</span>Skeleton</div>
<div class="menu" style="left:739px;top:378px;width:196px;height:563px">
<div class="mh" style="top:2px;font-size:11.1px">フォルダ</div>
<svg class="a" style="left:19px;top:18px" width="17" height="16" viewBox="0 0 17 16"><path d="M5.5 3.5 L9 2 L10 3 L15.5 1.5 L15.5 11 L5.5 13Z" fill="#7f94d4"/><path d="M5.5 4.5 L15.5 2.5 L15.5 11 L5.5 13Z" fill="#8ea2dc"/><path d="M12 2.6 L15.5 2 L15.5 11 L12 11.8Z" fill="#6a80c4"/><path d="M0 10 H8 M4 6 V14" stroke="#fff" stroke-width="2"/></svg>
<div class="mi" style="left:40px;top:21px;">新規フォルダ</div>
<div class="sep" style="top:41px"></div>
<div class="mh" style="top:46.5px;font-size:11.1px"><span style="letter-spacing:-.6px">C++</span> クラス</div>
<svg class="a" style="left:19px;top:62px" width="18" height="17" viewBox="0 0 18 17"><path d="M1 1.5 L6 1 L7 2.5 L13 2 L12.5 10 L3 10.5Z" fill="#c98a2c"/><path d="M3.5 3.5 L13.5 3 L12.5 10.5 L3.5 11Z" fill="#f0b24a"/><text x=".5" y="16" font-family="Liberation Sans,sans-serif" font-weight="bold" font-size="9.5" fill="#fff" stroke="#1c1c1c" stroke-width=".5" paint-order="stroke" letter-spacing="-1.1">C++</text></svg>
<div class="mi" style="left:40px;top:65.5px;">新規 C++ クラス...</div>
<div class="sep" style="top:86px"></div>
<div class="mh" style="top:91px;font-size:11.1px">アセットのインポート</div>
<svg class="a" style="left:19px;top:108px" width="17" height="17" viewBox="0 0 17 17"><rect x="3" y="1.5" width="11" height="11" fill="#2a3c82" stroke="#5a78d0" stroke-width="1.3"/><path d="M1.5 15.5 Q2 8 8 7.5 L8 5 L12.5 8.8 L8 12.5 L8 10 Q4 10 1.5 15.5Z" fill="#fff"/></svg>
<div class="mi" style="left:40px;top:110.5px;">/Game/FBX にインポート...</div>
<div class="sep" style="top:131px"></div>
<div class="mh" style="top:136px;font-size:11.4px">Create Basic Asset</div>
<div class="tile" style="left:4px;top:153px;background:#666"><svg class="a" style="left:0;top:0" width="36" height="36" viewBox="0 0 36 36"><defs><linearGradient id="tp" x1="0" y1="0" x2="0" y2="1"><stop offset="0" stop-color="#696969"/><stop offset="1" stop-color="#555"/></linearGradient><radialGradient id="gl"><stop offset="0" stop-color="#fff"/><stop offset=".4" stop-color="#fff" stop-opacity=".8"/><stop offset="1" stop-color="#fff" stop-opacity="0"/></radialGradient></defs><rect width="36" height="36" fill="url(#tp)"/><circle cx="20" cy="12" r="7" fill="url(#gl)"/><path d="M20 3 L20.7 11 L28 8 L21.3 12.6 L26 19 L19.8 13.6 L13 15 L18.8 11.4Z" fill="#fff"/><circle cx="12" cy="18.5" r="2" fill="#f2f2f2"/><circle cx="10" cy="25" r="1.4" fill="#e8e8e8"/><circle cx="14" cy="30.5" r="1" fill="#ddd"/></svg><div class="bar" style="background:#fff"></div></div>
<div class="mi" style="left:44px;top:165.5px;">パーティクル</div>
<div class="tile" style="left:4px;top:195px;background:#253458"><svg class="a" style="left:0;top:0" width="36" height="36" viewBox="0 0 36 36"><path d="M6 8 Q12 5 18 7 Q24 5 30 8 L32 24 Q25 22 18.5 25 Q11 22 4 25Z" fill="#b9b9b9"/><path d="M4 25 Q11 22 18.5 25 Q25 22 32 24 L31 27 Q25 25 18.5 28 Q11 25 5 28Z" fill="#8a8a8a"/><path d="M12 9 V19 M16 9 V20 M20 8.5 V20 M24 8.5 V19 M28 9 V18 M11 11 H29 M11 14.5 H29 M11 18 H29" stroke="#f4f4f4" stroke-width="1"/></svg><div class="bar" style="background:#3f7df0"></div></div>
<div class="mi" style="left:44px;top:207.5px;">ブループリント クラス</div>
<div class="tile" style="left:4px;top:237px;background:#234823"><svg class="a" style="left:0;top:0" width="36" height="36" viewBox="0 0 36 36"><path d="M6 4 L26 4 L30 8 L30 29 L6 29Z" fill="#7c7c7c"/><path d="M26 4 L30 8 L26 8Z" fill="#bdbdbd"/><rect x="8.0" y="6.5" width="2.6" height="2.6" fill="#9a9a9a"/><rect x="12.4" y="6.5" width="2.6" height="2.6" fill="#9a9a9a"/><rect x="16.8" y="6.5" width="2.6" height="2.6" fill="#9a9a9a"/><rect x="21.2" y="6.5" width="2.6" height="2.6" fill="#9a9a9a"/><rect x="25.6" y="6.5" width="2.6" height="2.6" fill="#9a9a9a"/><rect x="8.0" y="10.9" width="2.6" height="2.6" fill="#9a9a9a"/><rect x="12.4" y="10.9" width="2.6" height="2.6" fill="#9a9a9a"/><rect x="16.8" y="10.9" width="2.6" height="2.6" fill="#9a9a9a"/><rect x="21.2" y="10.9" width="2.6" height="2.6" fill="#9a9a9a"/><rect x="25.6" y="10.9" width="2.6" height="2.6" fill="#9a9a9a"/><rect x="8.0" y="15.3" width="2.6" height="2.6" fill="#9a9a9a"/><rect x="12.4" y="15.3" width="2.6" height="2.6" fill="#9a9a9a"/><rect x="16.8" y="15.3" width="2.6" height="2.6" fill="#9a9a9a"/><rect x="21.2" y="15.3" width="2.6" height="2.6" fill="#9a9a9a"/><rect x="25.6" y="15.3" width="2.6" height="2.6" fill="#9a9a9a"/><rect x="8.0" y="19.7" width="2.6" height="2.6" fill="#9a9a9a"/><rect x="12.4" y="19.7" width="2.6" height="2.6" fill="#9a9a9a"/><rect x="16.8" y="19.7" width="2.6" height="2.6" fill="#9a9a9a"/><rect x="21.2" y="19.7" width="2.6" height="2.6" fill="#9a9a9a"/><rect x="25.6" y="19.7" width="2.6" height="2.6" fill="#9a9a9a"/><rect x="8.0" y="24.1" width="2.6" height="2.6" fill="#9a9a9a"/><rect x="12.4" y="24.1" width="2.6" height="2.6" fill="#9a9a9a"/><rect x="16.8" y="24.1" width="2.6" height="2.6" fill="#9a9a9a"/><rect x="21.2" y="24.1" width="2.6" height="2.6" fill="#9a9a9a"/><rect x="25.6" y="24.1" width="2.6" height="2.6" fill="#9a9a9a"/></svg><div class="bar" style="background:#3fc13f"></div></div>
<div class="mi" style="left:44px;top:249.5px;">マテリアル</div>
<div class="tile" style="left:4px;top:279px;background:#5b3d12"><svg class="a" style="left:0;top:0" width="36" height="36" viewBox="0 0 36 36"><path d="M3 18 L13 15 L24 19 L33 17 L33 22 L14 31 L3 24Z" fill="#b9b9b9"/><path d="M3 18 L14 22 L33 17 L24 14 L13 15Z" fill="#e9e9e9"/><path d="M3 21 L14 26 L14 31 L3 24Z" fill="#8d8d8d"/><path d="M14 26 L33 20 L33 22 L14 31Z" fill="#d2d2d2"/><path d="M5 7 L8 17 L3.5 17Z" fill="#f2f2f2"/><path d="M17.5 5 L20 15 L15 15Z" fill="#dcdcdc"/><path d="M25.5 3 L32 17 L21 18Z" fill="#f6f6f6"/><path d="M25.5 3 L27 18 L21 18Z" fill="#c9c9c9"/></svg><div class="bar" style="background:#ff9a0e"></div></div>
<div class="mi" style="left:44px;top:291.5px;">レベル</div>
<div class="sep" style="top:322px"></div>
<div class="mh" style="top:327px;font-size:11.4px">Create Advanced Asset</div>
<div class="a" style="left:0;top:341px;width:194px;height:22px;background:#e0a50f;border-radius:3px"></div>
<div class="mi" style="left:18px;top:346px;color:#111">アニメーション</div>
<div class="arr" style="left:188px;top:348px;border-left-color:#111"></div>
<div class="mi" style="left:18px;top:368px;">ブループリント</div>
<div class="arr" style="left:188px;top:370px;"></div>
<div class="mi" style="left:18px;top:390px;">マテリアル・テクスチャ</div>
<div class="arr" style="left:188px;top:392px;"></div>
<div class="mi" style="left:18px;top:412px;">サウンド</div>
<div class="arr" style="left:188px;top:414px;"></div>
<div class="mi" style="left:18px;top:434px;">フィジックス</div>
<div class="arr" style="left:188px;top:436px;"></div>
<div class="mi" style="left:18px;top:456px;">ユーザーインターフェイス</div>
<div class="arr" style="left:188px;top:458px;"></div>
<div class="mi" style="left:18px;top:478px;">その他</div>
<div class="arr" style="left:188px;top:480px;"></div>
<div class="mi" style="left:18px;top:500px;">Blendables</div>
<div class="arr" style="left:188px;top:502px;"></div>
<div class="mi" style="left:18px;top:522px;">Paper2D</div>
<div class="arr" style="left:188px;top:524px;"></div>
<div class="mi" style="left:18px;top:544px;">AI</div>
<div class="arr" style="left:188px;top:546px;"></div>
</div>
<div class="menu" style="left:935px;top:720px;width:208px;height:275px">
<div class="a" style="left:-1px;top:167px;width:207px;height:42px;background:#e0a50f;border-radius:3px"></div>
<div class="tile" style="left:3px;top:2px;background:#35472f"><svg class="a" style="left:0;top:0" width="36" height="36" viewBox="0 0 36 36"><path d="M5 24 L14 31.5 L31 25 L20 22Z" fill="#18221a"/><path d="M9.8 23.3 L29.7 23.3 L14.3 29.6Z" fill="#9a9a9a"/><path d="M13.3 3.4 L15.6 10.3 L17.2 23.3 L14.1 25.4 L11 10Z" fill="#6f6f6f"/><path d="M5.5 5.2 L12.8 7.8 L15 22.6 L9.8 23.6Z" fill="#fff"/><path d="M18.4 8.6 L23.6 10.3 L29.9 23.4 L18.6 26.2 L16.6 12Z" fill="#fbfbfb"/><path d="M14.1 25.4 L18.6 26.2 L29.9 23.4 L15 28.6Z" fill="#cfcfcf"/></svg><div class="bar" style="background:#86d26c"></div></div>
<div class="mi" style="left:43px;top:14px;">Paper Flipbook</div>
<div class="tile" style="left:3px;top:44px;background:#5a3d18"><svg class="a" style="left:0;top:0" width="36" height="36" viewBox="0 0 36 36"><path d="M4 4 Q11 2 17 4 Q24 2 31 4 L30 29 Q24 27 17 30 Q10 27 3 29Z" fill="#9d9d9d"/><path d="M17 4 Q24 2 31 4 L30 29 Q24 27 17 30Z" fill="#888"/><g fill="#c8c8c8"><circle cx="11" cy="8.5" r="1.8"/><path d="M9.5 11 L12.5 11 L13 17 L15 24 L13.5 24.5 L11 18.5 L9 24.5 L7.5 24 L9.5 17Z"/></g><g fill="#fff"><circle cx="24.5" cy="7.5" r="1.9"/><path d="M23 10 L26.2 10 L26.6 17 L28.5 25 L26.8 25.4 L24.6 18.5 L22.5 25.4 L21 25 L23 17Z"/><path d="M23 11 L20.5 15.5 L21.5 16 L23.5 13Z"/></g></svg><div class="bar" style="background:#e07c0c"></div></div>
<div class="mi" style="left:43px;top:56px;">アニメーションBP</div>
<div class="tile" style="left:3px;top:86px;background:#17394f"><svg class="a" style="left:0;top:0" width="36" height="36" viewBox="0 0 36 36"><path d="M2.5 2.5 H33.5 V31 H2.5Z M2.5 12 H33.5 M2.5 21.5 H33.5 M13 2.5 V31 M23.5 2.5 V31" stroke="#41677a" stroke-width=".7" fill="none"/><g fill="#fff"><circle cx="14.2" cy="6.2" r="2.1"/><path d="M11.2 9.2 L16.6 8.6 L18.2 10.4 L17.6 18.5 L19.6 31.6 L17.2 31.9 L15.2 21.5 L13.2 31.6 L10.6 31.9 L11.8 18.5Z"/><path d="M15.5 6.6 L29 4.9 L29.1 6.1 L22.5 7.2 L20.5 9.8 L17 10.6 L16 8.2Z"/><path d="M11.2 9.2 L9.6 12.2 L12.2 14.4 L12.8 12.2Z"/><path d="M16.8 10 L20.4 7.2 L21.6 8 L18.4 11.6Z"/></g></svg><div class="bar" style="background:#0ea4f2"></div></div>
<div class="mi" style="left:43px;top:98px;">アニメーションオフセット</div>
<div class="tile" style="left:3px;top:128px;background:#17394f"><svg class="a" style="left:0;top:0" width="36" height="36" viewBox="0 0 36 36"><path d="M2.5 2.5 H33.5 V31 H2.5Z M2.5 12 H33.5 M2.5 21.5 H33.5 M13 2.5 V31 M23.5 2.5 V31" stroke="#41677a" stroke-width=".7" fill="none"/><g fill="#fff"><circle cx="14.2" cy="6.2" r="2.1"/><path d="M11.2 9.2 L16.6 8.6 L18.2 10.4 L17.6 18.5 L19.6 31.6 L17.2 31.9 L15.2 21.5 L13.2 31.6 L10.6 31.9 L11.8 18.5Z"/><path d="M15.5 6.6 L29 4.9 L29.1 6.1 L22.5 7.2 L20.5 9.8 L17 10.6 L16 8.2Z"/><path d="M11.2 9.2 L9.6 12.2 L12.2 14.4 L12.8 12.2Z"/><path d="M16.8 10 L20.4 7.2 L21.6 8 L18.4 11.6Z"/></g><text x="21.5" y="32" font-family="Liberation Sans,sans-serif" font-weight="bold" font-size="9.5" fill="#fff" letter-spacing="-.6">1D</text></svg><div class="bar" style="background:#0ea4f2"></div></div>
<div class="mi" style="left:43px;top:140px;">アニメーションオフセット1D</div>
<div class="tile" style="left:3px;top:170px;background:#9b9137"><svg class="a" style="left:0;top:0" width="36" height="36" viewBox="0 0 36 36"><rect x="3.5" y="7.5" width="29" height="8" rx="1.5" fill="#777"/><rect x="3.5" y="7.5" width="29" height="4" rx="1.5" fill="#8a8a8a"/><rect x="5.5" y="8.5" width="1.8" height="2.6" fill="#fff"/><rect x="9.1" y="8.5" width="1.8" height="2.6" fill="#fff"/><rect x="12.7" y="8.5" width="1.8" height="2.6" fill="#fff"/><rect x="16.3" y="8.5" width="1.8" height="2.6" fill="#fff"/><rect x="19.9" y="8.5" width="1.8" height="2.6" fill="#9d9d9d"/><rect x="23.5" y="8.5" width="1.8" height="2.6" fill="#9d9d9d"/><rect x="27.1" y="8.5" width="1.8" height="2.6" fill="#9d9d9d"/><rect x="5" y="12.5" width="15" height="1.8" fill="#fff"/><rect x="3.5" y="19" width="29" height="8" rx="1.5" fill="#777"/><rect x="3.5" y="19" width="29" height="4" rx="1.5" fill="#8a8a8a"/><rect x="5.5" y="20" width="1.8" height="2.6" fill="#fff"/><rect x="9.1" y="20" width="1.8" height="2.6" fill="#fff"/><rect x="12.7" y="20" width="1.8" height="2.6" fill="#fff"/><rect x="16.3" y="20" width="1.8" height="2.6" fill="#fff"/><rect x="19.9" y="20" width="1.8" height="2.6" fill="#9d9d9d"/><rect x="23.5" y="20" width="1.8" height="2.6" fill="#9d9d9d"/><rect x="27.1" y="20" width="1.8" height="2.6" fill="#9d9d9d"/><rect x="5" y="24" width="21" height="1.8" fill="#fff"/></svg><div class="bar" style="background:#1777c8"></div></div>
<div class="mi" style="left:43px;top:182px;color:#111">アニメーションコンポジット</div>
<div class="tile" style="left:3px;top:212px;background:#2b2a5a"><svg class="a" style="left:0;top:0" width="36" height="36" viewBox="0 0 36 36"><rect x="3" y="2.5" width="30" height="6" rx="1.5" fill="#8a8a8a"/><rect x="5.5" y="3.8" width="2.2" height="3.4" fill="#fff"/><rect x="11.1" y="3.8" width="2.2" height="3.4" fill="#fff"/><rect x="16.7" y="3.8" width="2.2" height="3.4" fill="#fff"/><rect x="22.3" y="3.8" width="2.2" height="3.4" fill="#fff"/><rect x="27.9" y="3.8" width="2.2" height="3.4" fill="#fff"/><rect x="3" y="10.5" width="30" height="21" rx="1.5" fill="#7d7d7d"/><rect x="5" y="13" width="24" height="1.8" fill="#fff"/><rect x="5" y="16.2" width="21" height="1" fill="#aaa"/><rect x="5" y="18.5" width="18" height="1.8" fill="#fff"/><rect x="5" y="21.5" width="10" height="1" fill="#aaa"/><rect x="5" y="23.8" width="9.5" height="1.8" fill="#fff"/><rect x="5" y="26.6" width="19" height="1" fill="#aaa"/><rect x="5" y="28.6" width="16.5" height="1.8" fill="#fff"/></svg><div class="bar" style="background:#7a66ff"></div></div>
<div class="mi" style="left:43px;top:224px;">アニメーションモンタージュ</div>
<div class="tile" style="left:3px;top:254px;background:#5a4233"><svg class="a" style="left:0;top:0" width="36" height="36" viewBox="0 0 36 36"><path d="M2.5 2.5 H33.5 V31 H2.5Z M13 2.5 V31 M23.5 2.5 V31" stroke="#8a7464" stroke-width=".8" fill="none"/><circle cx="9.5" cy="10.5" r="1.2" fill="#fff"/><circle cx="17" cy="12" r="1" fill="#ddd"/></svg><div class="bar" style="background:#c08050"></div></div>
</div>
<div class="a" style="left:1147.5px;top:924.5px;width:201px;height:52px;background:#efefef;border:1.5px solid #000;box-shadow:1px 1px 2px rgba(0,0,0,.6)"></div>
<div class="t" style="left:1158px;top:936px;font-size:12px;color:#0a0a0a">Anim Composite</div>
<div class="t" style="left:1158px;top:954px;font-size:11.2px;color:#505050">詳細は (Ctrl + Alt) を押してください</div>
<div class="t" style="left:359px;top:973px;font-size:12px;color:#e0e0e0">26 アイテム</div>
<div class="t sh" style="left:1454px;top:973px;font-size:12px;color:#e0e0e0">表示オプション</div>
</div></body></html>
